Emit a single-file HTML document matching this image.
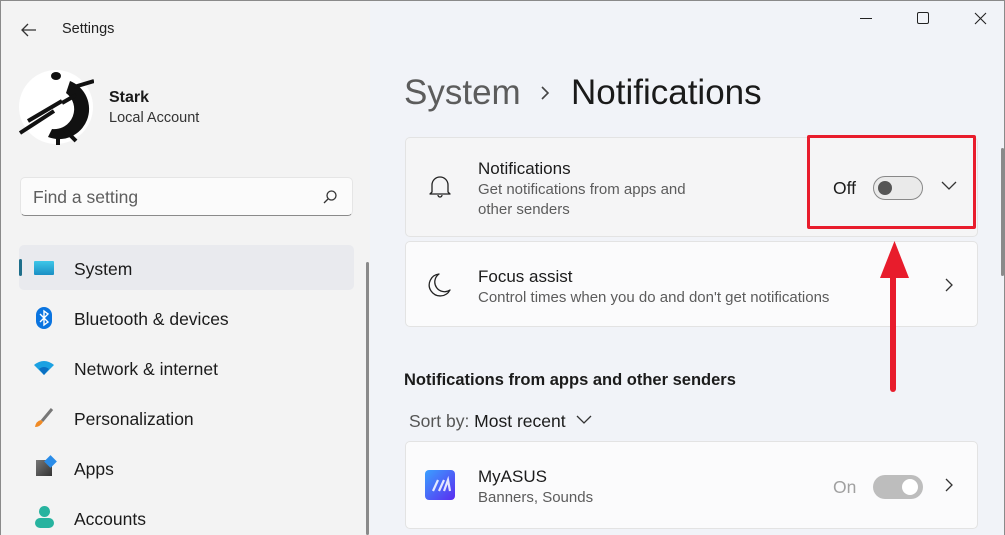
<!DOCTYPE html>
<html><head><meta charset="utf-8"><style>
*{margin:0;padding:0;box-sizing:border-box}
body{width:1005px;height:535px;overflow:hidden;font-family:"Liberation Sans",sans-serif;background:#f1f3f8;position:relative;color:#1b1b1b}
.a{position:absolute;white-space:nowrap}
.left{position:absolute;left:0;top:0;width:370px;height:535px;background:#f3f3f3}
.nav{position:absolute;left:74px;font-size:17.5px;color:#1b1b1b}
.card{position:absolute;left:405px;width:573px;border:1px solid #e3e3e3;border-radius:5px;background:#fbfbfc}
</style></head><body>
<div class="left"></div>
<div class="a" style="left:0;top:0;width:1005px;height:535px;border:1px solid #8a8a8a;border-bottom:none;z-index:9;pointer-events:none"></div>
<svg class="a" style="left:20px;top:22px" width="18" height="16"><path d="M16 8H2M8 2L2 8l6 6" stroke="#333" stroke-width="1.3" fill="none"/></svg>
<div class="a" style="left:62px;top:21px;font-size:14.5px;color:#222">Settings</div>
<svg class="a" style="left:18px;top:69px" width="76" height="76" viewBox="0 0 76 76"><circle cx="38" cy="38" r="37" fill="#fff"/><path d="M52 12 A28 28 0 0 1 30 68 L34 60 A20 20 0 0 0 48 24 Z" fill="#111"/><path d="M2 64 L36 42 M44 34 L58 26 M10 52 L44 32 M46 60 L58 72 M40 64 L40 76 M56 18 L76 12" stroke="#111" stroke-width="4"/><ellipse cx="38" cy="7" rx="5" ry="4" fill="#111"/></svg>
<div class="a" style="left:109px;top:89px;font-size:16px;font-weight:bold">Stark</div>
<div class="a" style="left:109px;top:110px;font-size:14.5px;color:#333">Local Account</div>
<div class="a" style="left:20px;top:177px;width:333px;height:39px;background:#fbfbfb;border:1px solid #e5e5e5;border-bottom:1px solid #8a8a8a;border-radius:5px"></div>
<div class="a" style="left:33px;top:187px;font-size:17.5px;color:#5e5e5e">Find a setting</div>
<svg class="a" style="left:322px;top:189px" width="16" height="16"><circle cx="9.5" cy="6.5" r="4.5" stroke="#333" stroke-width="1.3" fill="none"/><path d="M6.5 9.5L2 14" stroke="#333" stroke-width="1.3"/></svg>
<div class="a" style="left:19px;top:245px;width:335px;height:45px;background:#e9eaee;border-radius:5px"></div>
<div class="a" style="left:19px;top:259px;width:3px;height:17px;background:#1f6f8b;border-radius:2px"></div>
<div class="a" style="left:34px;top:261px;width:20px;height:14px;background:linear-gradient(#3fc7e8,#1a8fc4);border-radius:1px"></div>
<div class="nav" style="top:259px">System</div>
<svg class="a" style="left:36px;top:307px" width="16" height="22"><rect width="16" height="22" rx="8" fill="#0a74e0"/><path d="M4 7l8 8-4 3V4l4 3-8 8" stroke="#fff" stroke-width="1.4" fill="none"/></svg>
<div class="nav" style="top:309px">Bluetooth &amp; devices</div>
<svg class="a" style="left:34px;top:361px" width="20" height="14"><path d="M0 4Q10-4 20 4L10 14Z" fill="#1ba1e2"/><path d="M5 8Q10 4 15 8L10 14Z" fill="#0a6fc2"/></svg>
<div class="nav" style="top:359px">Network &amp; internet</div>
<svg class="a" style="left:34px;top:408px" width="20" height="20"><path d="M18 1L8 13" stroke="#777" stroke-width="3"/><path d="M7 12Q2 13 1 19Q6 19 9 14Z" fill="#f08a24"/></svg>
<div class="nav" style="top:409px">Personalization</div>
<div class="a" style="left:36px;top:460px;width:16px;height:16px;background:linear-gradient(135deg,#777,#333)"></div>
<div class="a" style="left:46px;top:457px;width:9px;height:9px;background:#2a8ce8;transform:rotate(45deg)"></div>
<div class="nav" style="top:459px">Apps</div>
<div class="a" style="left:39px;top:506px;width:11px;height:11px;border-radius:50%;background:#27b39f"></div>
<div class="a" style="left:35px;top:518px;width:19px;height:10px;border-radius:6px;background:#27b39f"></div>
<div class="nav" style="top:509px">Accounts</div>
<div class="a" style="left:366px;top:262px;width:3px;height:273px;background:#8a8a8a;border-radius:2px"></div>
<div class="a" style="left:1001px;top:148px;width:3px;height:128px;background:#8a8a8a;border-radius:2px"></div>
<div class="a" style="left:860px;top:18px;width:12px;height:1px;background:#222"></div>
<div class="a" style="left:917px;top:12px;width:12px;height:12px;border:1px solid #222;border-radius:2px"></div>
<svg class="a" style="left:974px;top:12px" width="13" height="13"><path d="M1 1L12 12M12 1L1 12" stroke="#222" stroke-width="1.1"/></svg>
<div class="a" style="left:404px;top:73px;font-size:35px;color:#5c5c5c">System</div>
<svg class="a" style="left:539px;top:85px" width="12" height="16"><path d="M3 2l6 6-6 6" stroke="#444" stroke-width="1.6" fill="none"/></svg>
<div class="a" style="left:571px;top:73px;font-size:35px;color:#1a1a1a">Notifications</div>
<div class="card" style="top:137px;height:100px;background:#f5f5f6"></div>
<svg class="a" style="left:428px;top:174px" width="24" height="26"><path d="M4 18V11a8 8 0 0 1 16 0v7l2 2H2Z M10 21a2 2 0 0 0 4 0" stroke="#222" stroke-width="1.3" fill="none" stroke-linejoin="round"/></svg>
<div class="a" style="left:478px;top:159px;font-size:17px">Notifications</div>
<div class="a" style="left:478px;top:181px;font-size:15px;color:#5c5c5c">Get notifications from apps and</div>
<div class="a" style="left:478px;top:201px;font-size:15px;color:#5c5c5c">other senders</div>
<div class="a" style="left:833px;top:178px;font-size:17.5px">Off</div>
<div class="a" style="left:873px;top:176px;width:50px;height:24px;border:1px solid #888;border-radius:12px;background:#eaeaea"></div>
<div class="a" style="left:878px;top:181px;width:14px;height:14px;border-radius:50%;background:#555"></div>
<svg class="a" style="left:941px;top:181px" width="16" height="10"><path d="M1 1l7 7 7-7" stroke="#333" stroke-width="1.3" fill="none"/></svg>
<div class="a" style="left:807px;top:135px;width:169px;height:94px;border:3px solid #e81c2c;border-radius:2px"></div>
<div class="card" style="top:241px;height:86px"></div>
<svg class="a" style="left:428px;top:272px" width="24" height="28"><path d="M11 2A11 11 0 1 0 22 18A9 9 0 0 1 11 2Z" stroke="#222" stroke-width="1.3" fill="none" stroke-linejoin="round"/></svg>
<div class="a" style="left:478px;top:267px;font-size:17px">Focus assist</div>
<div class="a" style="left:478px;top:289px;font-size:15px;color:#5c5c5c">Control times when you do and don't get notifications</div>
<svg class="a" style="left:944px;top:277px" width="10" height="16"><path d="M2 2l6 6-6 6" stroke="#333" stroke-width="1.3" fill="none"/></svg>
<div class="a" style="left:890px;top:272px;width:6px;height:120px;background:#e81c2c;border-radius:3px"></div>
<svg class="a" style="left:880px;top:241px" width="29" height="37"><path d="M14.5 0L29 37H0Z" fill="#e81c2c"/></svg>
<div class="a" style="left:404px;top:371px;font-size:16.5px;font-weight:bold">Notifications from apps and other senders</div>
<div class="a" style="left:409px;top:411px;font-size:17.5px;color:#555">Sort by: <span style="color:#1b1b1b">Most recent</span></div>
<svg class="a" style="left:576px;top:415px" width="16" height="10"><path d="M1 1l7 7 7-7" stroke="#333" stroke-width="1.3" fill="none"/></svg>
<div class="card" style="top:441px;height:88px"></div>
<div class="a" style="left:425px;top:470px;width:30px;height:30px;border-radius:4px;background:linear-gradient(135deg,#3aa0ff,#5b2cf0)"></div>
<svg class="a" style="left:425px;top:470px" width="30" height="30"><path d="M8 21l5-11M14 21l5-11M19 21l4-11 2 11" stroke="#fff" stroke-width="2.2" fill="none" opacity=".85"/></svg>
<div class="a" style="left:478px;top:467px;font-size:17px">MyASUS</div>
<div class="a" style="left:478px;top:489px;font-size:15px;color:#5c5c5c">Banners, Sounds</div>
<div class="a" style="left:833px;top:477px;font-size:17.5px;color:#a0a0a0">On</div>
<div class="a" style="left:873px;top:475px;width:50px;height:24px;border-radius:12px;background:#bdbdbd"></div>
<div class="a" style="left:902px;top:479px;width:16px;height:16px;border-radius:50%;background:#fff"></div>
<svg class="a" style="left:944px;top:477px" width="10" height="16"><path d="M2 2l6 6-6 6" stroke="#333" stroke-width="1.3" fill="none"/></svg>
</body></html>
